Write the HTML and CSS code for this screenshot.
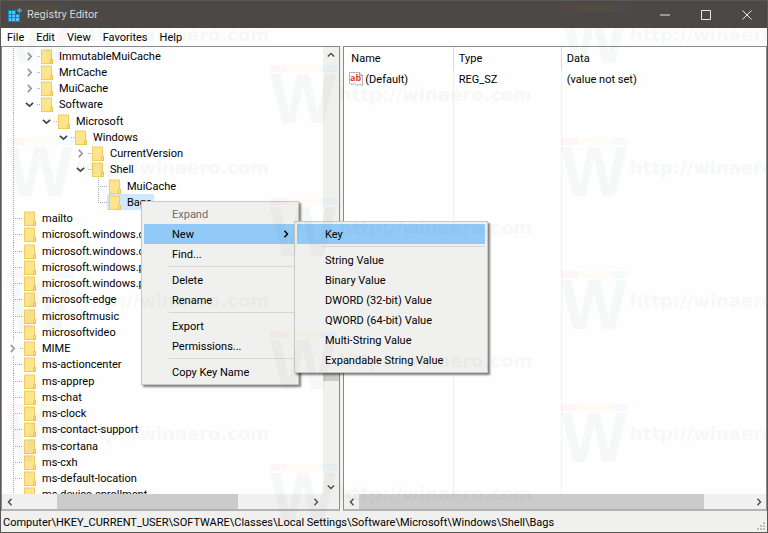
FILE: index.html
```html
<!DOCTYPE html>
<html lang="en">
  <head>
    <meta charset="UTF-8" />
    <meta name="viewport" content="width=device-width, initial-scale=1.0" />
    <title>Registry Editor</title>
    <link rel="stylesheet" href="styles.css">
  </head>
  <body>
    <!-- Shared icons -->
    <svg class="defs" aria-hidden="true">
      <symbol id="folder" viewBox="0 0 12 15">
        <path d="M0 .500H11V10H12V15H0Z" fill="#efcd62" />
        <path d="M1 1.500H10V14H1Z" fill="#fde48d" />
        <path d="M9.500 14.500V11L10.500 10H11.500V14.500Z" fill="#fbe07a" stroke="#e9c048" stroke-width=".8" />
      </symbol>
      <symbol id="right" viewBox="0 0 8 8">
        <path d="M2.500 .8 5.500 4 2.500 7.200" fill="none" stroke="currentColor" stroke-width="1.500" />
      </symbol>
      <symbol id="left" viewBox="0 0 8 8">
        <path d="M5.500 .8 2.500 4 5.500 7.200" fill="none" stroke="currentColor" stroke-width="1.500" />
      </symbol>
      <symbol id="down" viewBox="0 0 8 8">
        <path d="M.8 2.500 4 5.500 7.200 2.500" fill="none" stroke="currentColor" stroke-width="1.500" />
      </symbol>
      <symbol id="up" viewBox="0 0 8 8">
        <path d="M.8 5.500 4 2.500 7.200 5.500" fill="none" stroke="currentColor" stroke-width="1.500" />
      </symbol>
      <symbol id="mark" viewBox="0 0 270 70">
        <path d="M0 0H17V7H0Z" fill="#f33" />
        <path d="M17 0H50V7H17Z" fill="#fc0" />
        <path d="M50 0H67V7H50Z" fill="#09f" />
        <text class="mark-logo" x="0" y="58">W</text>
        <text class="mark-url" x="69" y="36">http://winaero.com</text>
      </symbol>
    </svg>

    <div class="window">
      <header class="titlebar">
        <svg class="app-icon" viewBox="0 0 14 14">
          <path d="M0 2H12V14H0Z" fill="#0f87c4" />
          <path d="M1 3H3V6H1ZM4 3H7V6H4ZM1 7H3V9H1ZM4 7H7V9H4ZM8 7H11V9H8ZM1 10H3V13H1ZM4 10H7V13H4ZM8 10H11V13H8Z" fill="#52c8fa" />
          <path d="M8 0H14V6H8Z" fill="#4c4846" />
          <path d="M11.500 0V5M9 2.500H14" stroke="#36b5f0" stroke-width="1.500" />
        </svg>
        <h1>Registry Editor</h1>
        <div class="window-buttons">
          <button aria-label="Minimize"><svg viewBox="0 0 10 10"><path d="M0 5H10" stroke-width="1" /></svg></button>
          <button aria-label="Maximize"><svg viewBox="0 0 10 10"><path d="M.5 .5H9.500V9.500H.5Z" /></svg></button>
          <button aria-label="Close"><svg viewBox="0 0 10 10"><path d="M.5 .5 9.500 9.500M9.500 .5 .5 9.500" /></svg></button>
        </div>
      </header>

      <nav class="menubar">
        <button>File</button>
        <button>Edit</button>
        <button>View</button>
        <button>Favorites</button>
        <button>Help</button>
      </nav>

      <main class="panes">
        <!-- Key tree -->
        <section class="pane tree-pane">
          <div class="pane-body">
            <ul class="tree">
              <li class="level-1"><span class="toggle"><svg><use href="#right" /></svg></span><svg class="folder"><use href="#folder" /></svg><span>ImmutableMuiCache</span></li>
              <li class="level-1"><span class="toggle"><svg><use href="#right" /></svg></span><svg class="folder"><use href="#folder" /></svg><span>MrtCache</span></li>
              <li class="level-1"><span class="toggle"><svg><use href="#right" /></svg></span><svg class="folder"><use href="#folder" /></svg><span>MuiCache</span></li>
              <li class="level-1"><span class="toggle open"><svg><use href="#down" /></svg></span><svg class="folder"><use href="#folder" /></svg><span>Software</span></li>
              <li class="level-2"><span class="toggle open"><svg><use href="#down" /></svg></span><svg class="folder"><use href="#folder" /></svg><span>Microsoft</span></li>
              <li class="level-3"><span class="toggle open"><svg><use href="#down" /></svg></span><svg class="folder"><use href="#folder" /></svg><span>Windows</span></li>
              <li class="level-4"><span class="toggle"><svg><use href="#right" /></svg></span><svg class="folder"><use href="#folder" /></svg><span>CurrentVersion</span></li>
              <li class="level-4"><span class="toggle open"><svg><use href="#down" /></svg></span><svg class="folder"><use href="#folder" /></svg><span>Shell</span></li>
              <li class="level-5"><span class="branch"></span><svg class="folder"><use href="#folder" /></svg><span>MuiCache</span></li>
              <li class="level-5"><span class="branch last"></span><span class="selected"><svg class="folder"><use href="#folder" /></svg><span>Bags</span></span></li>
              <li><span class="branch"></span><svg class="folder"><use href="#folder" /></svg><span>mailto</span></li>
              <li><span class="branch"></span><svg class="folder"><use href="#folder" /></svg><span>microsoft.windows.c</span></li>
              <li><span class="branch"></span><svg class="folder"><use href="#folder" /></svg><span>microsoft.windows.c</span></li>
              <li><span class="branch"></span><svg class="folder"><use href="#folder" /></svg><span>microsoft.windows.p</span></li>
              <li><span class="branch"></span><svg class="folder"><use href="#folder" /></svg><span>microsoft.windows.p</span></li>
              <li><span class="branch"></span><svg class="folder"><use href="#folder" /></svg><span>microsoft-edge</span></li>
              <li><span class="branch"></span><svg class="folder"><use href="#folder" /></svg><span>microsoftmusic</span></li>
              <li><span class="branch"></span><svg class="folder"><use href="#folder" /></svg><span>microsoftvideo</span></li>
              <li><span class="toggle"><svg><use href="#right" /></svg></span><svg class="folder"><use href="#folder" /></svg><span>MIME</span></li>
              <li><span class="branch"></span><svg class="folder"><use href="#folder" /></svg><span>ms-actioncenter</span></li>
              <li><span class="branch"></span><svg class="folder"><use href="#folder" /></svg><span>ms-apprep</span></li>
              <li><span class="branch"></span><svg class="folder"><use href="#folder" /></svg><span>ms-chat</span></li>
              <li><span class="branch"></span><svg class="folder"><use href="#folder" /></svg><span>ms-clock</span></li>
              <li><span class="branch"></span><svg class="folder"><use href="#folder" /></svg><span>ms-contact-support</span></li>
              <li><span class="branch"></span><svg class="folder"><use href="#folder" /></svg><span>ms-cortana</span></li>
              <li><span class="branch"></span><svg class="folder"><use href="#folder" /></svg><span>ms-cxh</span></li>
              <li><span class="branch"></span><svg class="folder"><use href="#folder" /></svg><span>ms-default-location</span></li>
              <li><span class="branch"></span><svg class="folder"><use href="#folder" /></svg><span>ms-device-enrollment</span></li>
            </ul>
            <div class="scroll-y">
              <button aria-label="Scroll up"><svg><use href="#up" /></svg></button>
              <div class="track"><div class="thumb"></div></div>
              <button aria-label="Scroll down"><svg><use href="#down" /></svg></button>
            </div>
          </div>
          <div class="scroll-x">
            <button aria-label="Scroll left"><svg><use href="#left" /></svg></button>
            <div class="track"><div class="thumb"></div></div>
            <button aria-label="Scroll right"><svg><use href="#right" /></svg></button>
          </div>
        </section>

        <!-- Values of the selected key -->
        <section class="pane values-pane">
          <div class="pane-body">
            <table class="values">
              <thead>
                <tr><th class="name">Name</th><th class="type">Type</th><th>Data</th></tr>
              </thead>
              <tbody>
                <tr>
                  <td>
                    <div class="value-name">
                      <svg class="string-icon" viewBox="0 0 14 14">
                        <path d="M.5 .5H10.500L13.500 3.500V13.500L11 12.500 8 13.500 5 11.500 3 12.500 .5 11.500Z" fill="#fff" stroke="#b5b5b5" />
                        <path d="M10.500 .5V3.500H13.500" fill="none" stroke="#999" />
                        <text x="1" y="9">ab</text>
                      </svg>
                      <span>(Default)</span>
                    </div>
                  </td>
                  <td>REG_SZ</td>
                  <td>(value not set)</td>
                </tr>
                <tr class="filler"><td></td><td></td><td></td></tr>
              </tbody>
            </table>
          </div>
          <div class="scroll-x">
            <button aria-label="Scroll left"><svg><use href="#left" /></svg></button>
            <div class="track"><div class="thumb"></div></div>
            <button aria-label="Scroll right"><svg><use href="#right" /></svg></button>
          </div>
        </section>
      </main>

      <footer class="statusbar">
        <span>Computer\HKEY_CURRENT_USER\SOFTWARE\Classes\Local Settings\Software\Microsoft\Windows\Shell\Bags</span>
        <svg class="grip" viewBox="0 0 8 8">
          <path d="M6 0H8V2H6ZM3 3H5V5H3ZM6 3H8V5H6ZM0 6H2V8H0ZM3 6H5V8H3ZM6 6H8V8H6Z" fill="#bfbfbf" />
        </svg>
      </footer>
    </div>

    <!-- Context menu -->
    <ul class="menu context-menu">
      <li><button disabled>Expand</button></li>
      <li class="active">
        <button>New<svg><use href="#right" /></svg></button>
        <ul class="menu submenu">
          <li class="active"><button>Key</button></li>
          <li class="separator"></li>
          <li><button>String Value</button></li>
          <li><button>Binary Value</button></li>
          <li><button>DWORD (32-bit) Value</button></li>
          <li><button>QWORD (64-bit) Value</button></li>
          <li><button>Multi-String Value</button></li>
          <li><button>Expandable String Value</button></li>
        </ul>
      </li>
      <li><button>Find...</button></li>
      <li class="separator"></li>
      <li><button>Delete</button></li>
      <li><button>Rename</button></li>
      <li class="separator"></li>
      <li><button>Export</button></li>
      <li><button>Permissions...</button></li>
      <li class="separator"></li>
      <li><button>Copy Key Name</button></li>
    </ul>

    <!-- Watermark -->
    <svg class="watermark">
      <use href="#mark" x="7" y="5" width="270" height="70" />
      <use href="#mark" x="7" y="138" width="270" height="70" />
      <use href="#mark" x="7" y="271" width="270" height="70" />
      <use href="#mark" x="7" y="404" width="270" height="70" />
      <use href="#mark" x="270" y="65" width="270" height="70" />
      <use href="#mark" x="270" y="198" width="270" height="70" />
      <use href="#mark" x="270" y="331" width="270" height="70" />
      <use href="#mark" x="270" y="464" width="270" height="70" />
      <use href="#mark" x="561" y="5" width="270" height="70" />
      <use href="#mark" x="561" y="138" width="270" height="70" />
      <use href="#mark" x="561" y="271" width="270" height="70" />
      <use href="#mark" x="561" y="404" width="270" height="70" />
    </svg>
  </body>
</html>
```

FILE: styles.css
```css
* {
  box-sizing: border-box;
}

body {
  margin: 0;
  overflow: hidden;
  font-family: Roboto, "Open Sans", sans-serif;
  font-size: 11px;
  line-height: 17px;
  color: #000;
}

ul {
  margin: 0;
  padding: 0;
  list-style: none;
}

button {
  padding: 0;
  border: none;
  background: none;
  font: inherit;
  color: inherit;
}

.defs {
  position: absolute;
  width: 0;
  height: 0;
}

/* Window */
.window {
  display: flex;
  flex-direction: column;
  height: 100vh;
  border: 1px solid #5a5857;
  border-top: none;
  background: #fefefe;
}

.titlebar {
  display: flex;
  align-items: center;
  height: 28px;
  padding-left: 7px;
  gap: 5px;
  background: #4c4846;
  border-top: 1px solid #5a5857;
  color: #d8d8d8;
}

.titlebar h1 {
  flex: 1;
  margin: 0;
  font-size: 11px;
  font-weight: normal;
}

.app-icon {
  width: 14px;
  height: 14px;
}

.window-buttons {
  display: flex;
}

.window-buttons button {
  width: 41px;
  height: 27px;
  display: flex;
  align-items: center;
  justify-content: center;
}

.window-buttons svg {
  width: 10px;
  height: 10px;
  fill: none;
  stroke: #e8e8e8;
}

.menubar {
  display: flex;
  align-items: center;
  gap: 12px;
  height: 18px;
  padding-left: 6px;
}

/* Panes */
.panes {
  flex: 1;
  min-height: 0;
  display: flex;
  gap: 3px;
  background: #f2f2f1;
}

.pane {
  display: flex;
  flex-direction: column;
  min-width: 0;
  border: 1px solid #888c92;
  border-bottom: 2px solid #b2b3b6;
  background: #fefefe;
}

.tree-pane {
  flex: 4;
}

.values-pane {
  flex: 5;
}

.pane-body {
  flex: 1;
  min-height: 0;
  display: flex;
  overflow: hidden;
}

/* Tree */
.tree {
  flex: 1;
  overflow: hidden;
  padding-top: 1px;
}

.tree li {
  display: flex;
  align-items: center;
  height: 16px;
  padding-left: 2px;
  white-space: nowrap;
  background: repeating-linear-gradient(#aaa 0 1px, transparent 1px 2px) 11px 0 / 1px 100% no-repeat;
}

/* keeps the row pitch a little above 16px */
.tree li:nth-child(4n) {
  height: 17px;
}

.tree .level-1 {
  padding-left: 19px;
}

.tree .level-2 {
  padding-left: 36px;
}

.tree .level-3 {
  padding-left: 53px;
}

.tree .level-4 {
  padding-left: 70px;
}

.tree .level-5 {
  padding-left: 87px;
}

.folder {
  flex: none;
  width: 12px;
  height: 15px;
  margin-right: 6px;
}

.toggle,
.branch {
  flex: none;
  width: 20px;
  height: 100%;
}

.toggle {
  display: flex;
  align-items: center;
  padding-left: 4px;
  color: #999;
  background: linear-gradient(90deg, #aaa 1px, transparent 1px) 16px 8px / 2px 1px repeat-x;
  background-clip: content-box;
}

.toggle svg {
  width: 9px;
  height: 9px;
  background: #fefefe;
  outline: 2px solid #fefefe;
}

.toggle.open {
  color: #444;
}

.branch {
  background:
    repeating-linear-gradient(#aaa 0 1px, transparent 1px 2px) 9px 0 / 1px 100% no-repeat,
    repeating-linear-gradient(90deg, #aaa 0 1px, transparent 1px 2px) 9px 8px / 10px 1px no-repeat;
}

.branch.last {
  background-size: 1px 9px, 10px 1px;
}

.selected {
  display: flex;
  align-items: center;
  height: 100%;
  margin-left: -2px;
  padding: 0 2px;
  background: #cde8ff;
}

/* Scrollbars */
.scroll-y,
.scroll-x {
  flex: none;
  display: flex;
  background: #f0f0ef;
  color: #505050;
}

.scroll-y {
  flex-direction: column;
  width: 16px;
}

.scroll-x {
  height: 15px;
}

.scroll-y button,
.scroll-x button {
  width: 15px;
  height: 15px;
  display: flex;
  align-items: center;
  justify-content: center;
}

.scroll-y svg,
.scroll-x svg {
  width: 8px;
  height: 8px;
}

.track {
  flex: 1;
  display: flex;
}

.thumb {
  background: #cbcbc9;
}

.scroll-y .track {
  align-items: flex-end;
  padding-bottom: 98px;
}

.scroll-y .thumb {
  width: 100%;
  height: 20px;
}

.scroll-x .thumb {
  width: 88%;
}

.tree-pane .scroll-x {
  padding-right: 16px;
}

.tree-pane .scroll-x .thumb {
  width: 62%;
  margin-left: 40px;
}

/* Values table */
.values {
  width: 100%;
  height: 100%;
  table-layout: fixed;
  border-collapse: collapse;
}

.values th,
.values td {
  height: 18px;
  padding: 0 5px;
  font-weight: normal;
  text-align: left;
  white-space: nowrap;
  border-right: 1px solid #edf2fa;
}

.values th {
  height: 23px;
  border-right-color: #ddd;
}

.values th:last-child,
.values td:last-child {
  border-right: none;
}

.values th.name {
  width: 109px;
  padding-left: 7px;
}

.values th.type {
  width: 108px;
}

.values .filler td {
  height: auto;
}

.value-name {
  display: flex;
  align-items: center;
  gap: 2px;
}

.string-icon {
  width: 14px;
  height: 14px;
}

.string-icon text {
  font: bold 9px "Open Sans", sans-serif;
  fill: #d84a20;
}

/* Status bar */
.statusbar {
  display: flex;
  justify-content: space-between;
  align-items: center;
  height: 21px;
  padding: 2px 2px 0;
  background: #f0f0ef;
  white-space: nowrap;
}

.grip {
  align-self: flex-end;
  width: 8px;
  height: 8px;
  margin-bottom: 2px;
}

/* Menus */
.menu {
  position: absolute;
  padding: 2px;
  background: #f0f0ef;
  border: 1px solid #c8c8c8;
  box-shadow: 2px 2px 2px rgba(0, 0, 0, 0.5);
}

.menu button {
  display: flex;
  align-items: center;
  justify-content: space-between;
  width: 100%;
  height: 20px;
  padding: 0 6px 0 28px;
  text-align: left;
  white-space: nowrap;
}

.menu button:disabled {
  color: #6d6d6d;
}

.menu svg {
  width: 8px;
  height: 8px;
}

.menu .active {
  position: relative;
}

.menu .active > button {
  background: #91c9f7;
}

.menu .separator {
  height: 6px;
  margin-left: 25px;
  background: linear-gradient(#d7d7d7, #d7d7d7) 0 2px / 100% 1px no-repeat;
}

.context-menu {
  left: 141px;
  top: 201px;
  width: 158px;
}

.submenu {
  left: 150px;
  top: -3px;
  width: 194px;
}

/* Watermark */
.watermark {
  position: absolute;
  inset: 0;
  width: 100%;
  height: 100%;
  opacity: 0.035;
  pointer-events: none;
}

.mark-logo {
  font: bold 70px "Liberation Sans", Arial, sans-serif;
  fill: #465;
}

.mark-url {
  font: bold 18px "DejaVu Sans", sans-serif;
  fill: #465;
}
```
